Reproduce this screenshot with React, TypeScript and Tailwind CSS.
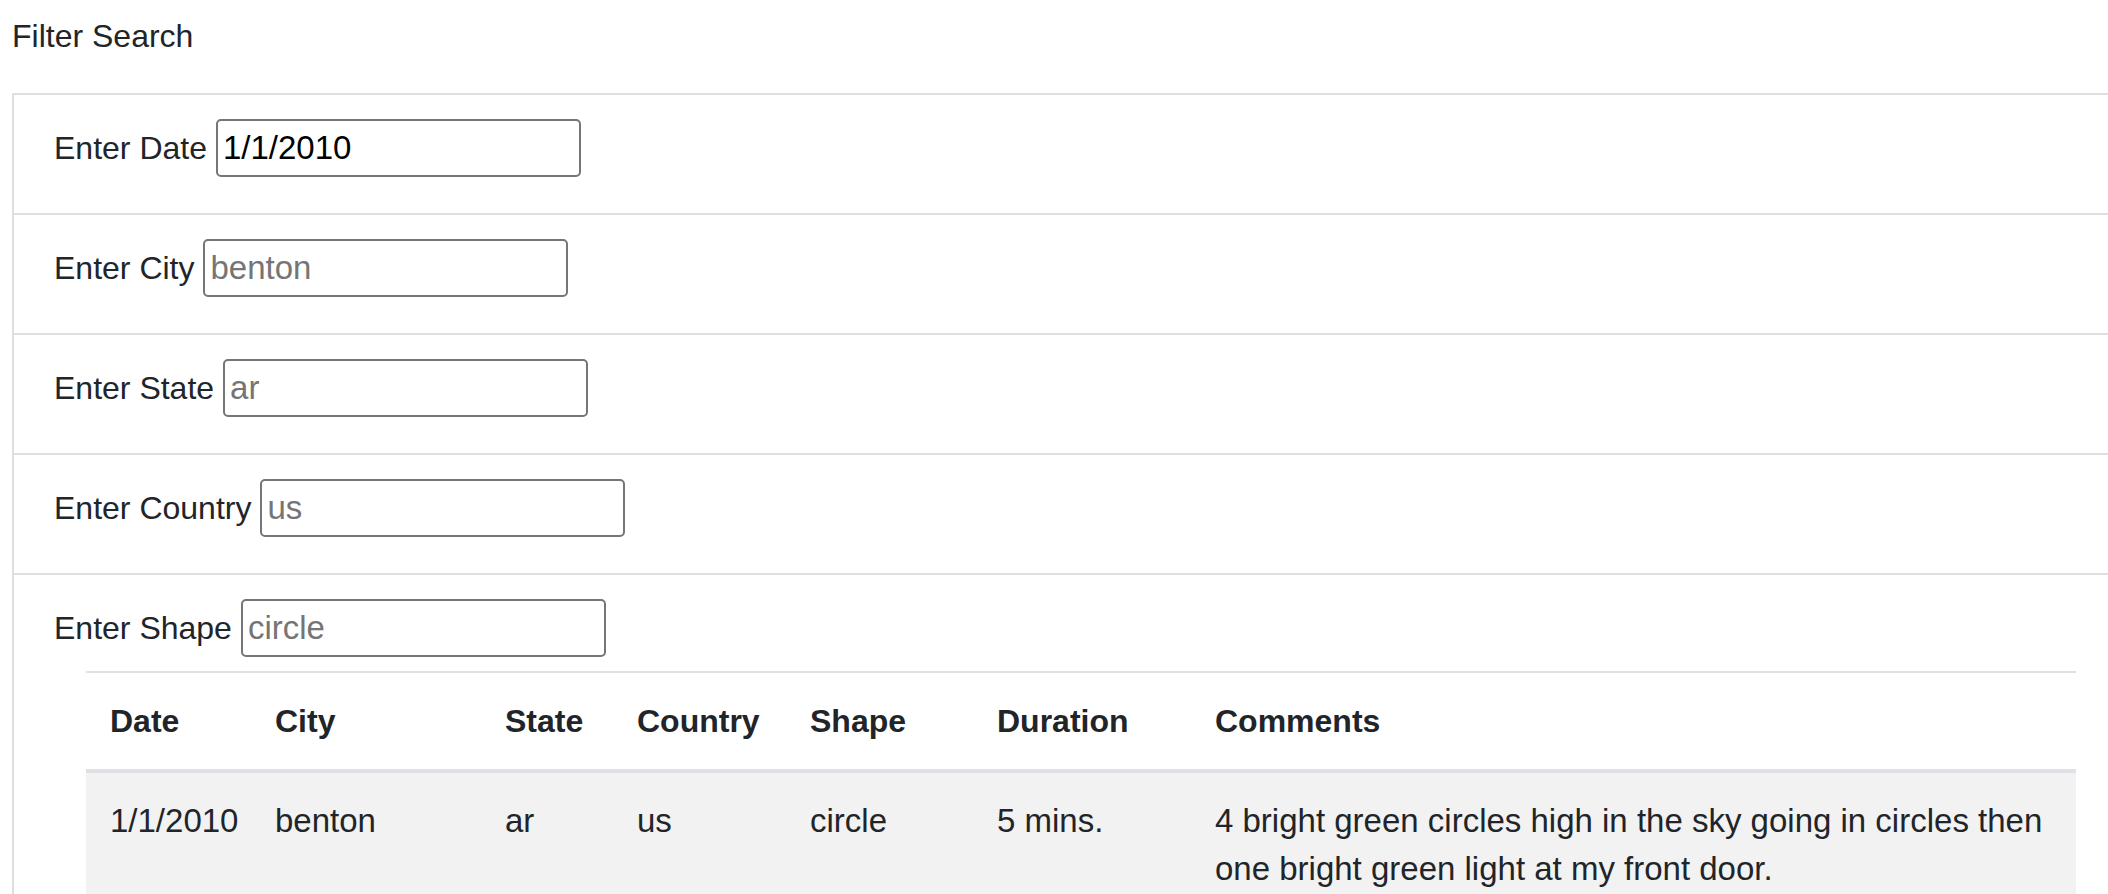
import React from "react";

const FILTERS = [
    { label: "Enter Date", value: "1/1/2010", placeholder: "" },
    { label: "Enter City", value: "", placeholder: "benton" },
    { label: "Enter State", value: "", placeholder: "ar" },
    { label: "Enter Country", value: "", placeholder: "us" },
    { label: "Enter Shape", value: "", placeholder: "circle" },
];

const COLUMNS = [
    { name: "Date", w: "w-[165px]" },
    { name: "City", w: "w-[230px]" },
    { name: "State", w: "w-[132px]" },
    { name: "Country", w: "w-[173px]" },
    { name: "Shape", w: "w-[187px]" },
    { name: "Duration", w: "w-[218px]" },
    { name: "Comments", w: "" },
];

function FilterRow({ label, value, placeholder, children }: { label: string; value: string; placeholder: string; children?: React.ReactNode }) {
    return (
        <li className="border-t-2 border-[#dfdfdf] pl-[40px] pt-[24px] pb-[36px] last:pb-0">
            <div className="flex items-center h-[58px]">
                <label className="text-[32px] leading-[48px] text-[#212529] whitespace-nowrap">{label}</label>
                <input
                    defaultValue={value}
                    placeholder={placeholder}
                    className="ml-[9px] w-[365px] h-[58px] border-2 border-[#767676] rounded-[5px] px-[5px] text-[33px] text-black placeholder-[#757575] outline-none"
                />
            </div>
            {children}
        </li>
    );
}

export default function App() {
    return (
        <div className="min-h-screen bg-white overflow-hidden pl-[12px] pt-[12px] font-['Liberation_Sans',Arial,sans-serif] text-[#212529]">
            <h1 className="text-[32px] leading-[48px] font-normal">Filter Search</h1>

            <ul className="mt-[33px] border-l-2 border-[#dfdfdf] list-none">
                {FILTERS.map((f, i) => (
                    <FilterRow key={f.label} {...f}>
                        {i === FILTERS.length - 1 && (
                            <div className="mt-[14px] ml-[32px] mr-[32px]">
                                <table className="w-full table-fixed border-collapse text-[33px] leading-[48px]">
                                    <colgroup>
                                        {COLUMNS.map(c => <col key={c.name} className={c.w} />)}
                                    </colgroup>
                                    <thead>
                                        <tr className="border-t-2 border-[#dee2e6]">
                                            {COLUMNS.map(c => (
                                                <th key={c.name} className="text-left text-[32px] font-bold px-[24px] py-[24px] border-b-4 border-[#dee2e6]">{c.name}</th>
                                            ))}
                                        </tr>
                                    </thead>
                                    <tbody>
                                        <tr className="bg-[#f2f2f2]">
                                            <td className="px-[24px] py-[24px] align-top">1/1/2010</td>
                                            <td className="px-[24px] py-[24px] align-top">benton</td>
                                            <td className="px-[24px] py-[24px] align-top">ar</td>
                                            <td className="px-[24px] py-[24px] align-top">us</td>
                                            <td className="px-[24px] py-[24px] align-top">circle</td>
                                            <td className="px-[24px] py-[24px] align-top">5 mins.</td>
                                            <td className="px-[24px] py-[24px] align-top whitespace-nowrap">
                                                4 bright green circles high in the sky going in circles then<br />
                                                one bright green light at my front door.
                                            </td>
                                        </tr>
                                    </tbody>
                                </table>
                            </div>
                        )}
                    </FilterRow>
                ))}
            </ul>
        </div>
    );
}
